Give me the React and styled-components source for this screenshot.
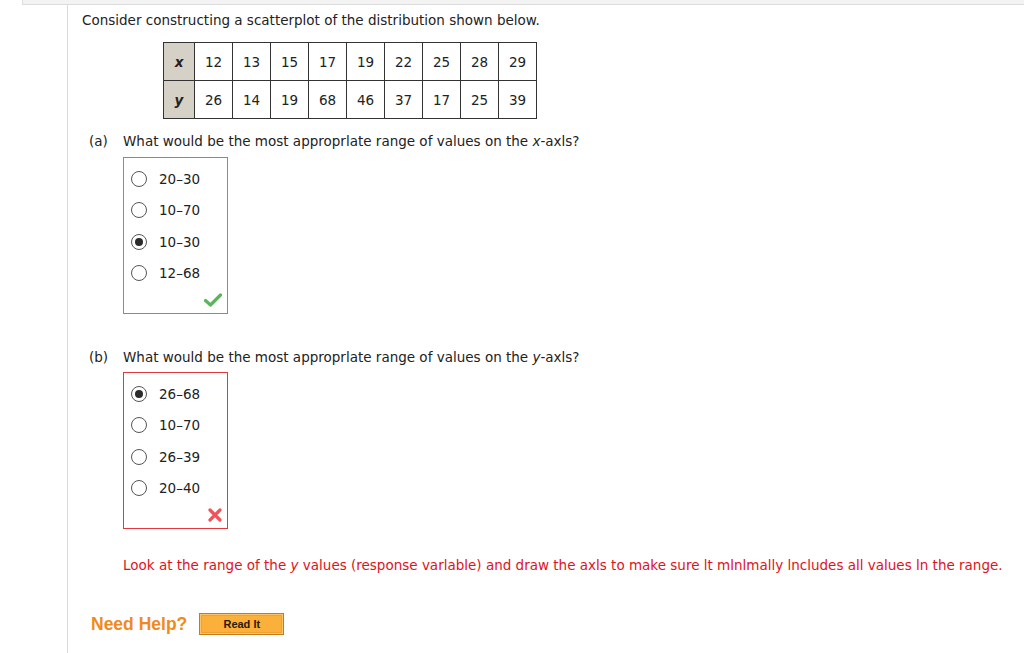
import React from "react";
import styled, { createGlobalStyle } from "styled-components";

const Global = createGlobalStyle`
  html, body { margin: 0; padding: 0; background: #fff; overflow: hidden; }
  body { font-family: "DejaVu Sans", Verdana, sans-serif; font-size: 13.5px; color: #222; }
`;

const TopBand = styled.div`
  margin-left: 22px;
  height: 4px;
  background: #f3f3f3;
  border-left: 1px solid #dcdcdc;
  border-bottom: 1px solid #dcdcdc;
`;

const Main = styled.div`
  margin-left: 67px;
  border-left: 1px solid #dcdcdc;
  height: 648px;
  padding-left: 14px;
  box-sizing: border-box;
`;

const Intro = styled.p`
  margin: 0;
  padding-top: 7px;
  line-height: 16px;
`;

const DataTable = styled.table`
  border-collapse: collapse;
  margin: 14px 0 0 81px;
`;

const HeadCell = styled.th`
  width: 30px;
  height: 37px;
  padding: 0;
  background: #d5d1c7;
  border: 1px solid #333;
  font-weight: bold;
  font-style: italic;
  text-align: center;
`;

const Cell = styled.td`
  width: 37px;
  height: 37px;
  padding: 0;
  border: 1px solid #333;
  text-align: center;
`;

const Part = styled.div`
  display: flex;
  margin-top: ${(p) => p.$top}px;
  margin-left: 7px;
`;

const Label = styled.span`
  width: 34px;
  line-height: 16px;
`;

const Body = styled.div`
  display: flex;
  flex-direction: column;
`;

const Question = styled.div`
  line-height: 16px;
`;

const Choices = styled.div`
  position: relative;
  width: 105px;
  height: 157px;
  margin-top: ${(p) => p.$gap}px;
  border: 1px solid ${(p) => (p.$ok ? "#6fa34c" : "#e0393e")};
  box-sizing: border-box;
  padding-top: 5px;
`;

const Option = styled.label`
  display: flex;
  align-items: center;
  height: 31.5px;
  padding-left: 7px;
  gap: 12px;
  color: #222;
`;

const Radio = styled.span`
  width: 16px;
  height: 16px;
  border-radius: 50%;
  border: 1px solid #555;
  box-sizing: border-box;
  display: flex;
  align-items: center;
  justify-content: center;
  background: #fff;
  &::after {
    content: "";
    display: ${(p) => (p.$on ? "block" : "none")};
    width: 8px;
    height: 8px;
    border-radius: 50%;
    background: #2b2b2b;
  }
`;

const Mark = styled.span`
  position: absolute;
  right: 5px;
  bottom: 6px;
  display: flex;
`;

const Feedback = styled.div`
  margin-top: 28px;
  margin-left: 41px;
  color: #e0121c;
  line-height: 16px;
`;

const Help = styled.div`
  display: flex;
  align-items: center;
  gap: 12px;
  margin-top: 40px;
  margin-left: 9px;
`;

const HelpText = styled.span`
  font-family: "Liberation Sans", Arial, sans-serif;
  font-weight: bold;
  font-size: 17.5px;
  color: #f08a1e;
`;

const ReadButton = styled.button`
  width: 85px;
  height: 22px;
  padding: 0;
  border: 1px solid #c97a18;
  background: #fbb03c;
  box-shadow: inset 0 0 0 1px #fdc56a, inset 0 0 0 2px #f2a02e;
  font-family: "Liberation Sans", Arial, sans-serif;
  font-weight: bold;
  font-size: 11px;
  color: #2a1a00;
  cursor: pointer;
`;

const Check = () => (
  <svg width="18" height="14" viewBox="0 0 18 14">
    <path d="M1.5 7.5 L6.5 12 L16.5 2" fill="none" stroke="#5bb55b" strokeWidth="3.2" strokeLinecap="round" strokeLinejoin="round" />
  </svg>
);

const Cross = () => (
  <svg width="14" height="14" viewBox="0 0 14 14">
    <path d="M2 2 L12 12 M12 2 L2 12" fill="none" stroke="#f0545a" strokeWidth="3.2" strokeLinecap="round" />
  </svg>
);

const xs = [12, 13, 15, 17, 19, 22, 25, 28, 29];
const ys = [26, 14, 19, 68, 46, 37, 17, 25, 39];

const Choice = ({ opts, sel, ok, gap }) => (
  <Choices $ok={ok} $gap={gap}>
    {opts.map((o, i) => (
      <Option key={o}>
        <Radio $on={i === sel} />
        {o}
      </Option>
    ))}
    <Mark>{ok ? <Check /> : <Cross />}</Mark>
  </Choices>
);

export default function App() {
  return (
    <>
      <Global />
      <TopBand />
      <Main>
        <Intro>Consider constructing a scatterplot of the distribution shown below.</Intro>
        <DataTable>
          <tbody>
            <tr>
              <HeadCell>x</HeadCell>
              {xs.map((v, i) => <Cell key={i}>{v}</Cell>)}
            </tr>
            <tr>
              <HeadCell>y</HeadCell>
              {ys.map((v, i) => <Cell key={i}>{v}</Cell>)}
            </tr>
          </tbody>
        </DataTable>
        <Part $top={14}>
          <Label>(a)</Label>
          <Body>
            <Question>What would be the most approprlate range of values on the <i>x</i>-axls?</Question>
            <Choice gap={8} opts={["20\u201330", "10\u201370", "10\u201330", "12\u201368"]} sel={2} ok />
          </Body>
        </Part>
        <Part $top={35}>
          <Label>(b)</Label>
          <Body>
            <Question>What would be the most approprlate range of values on the <i>y</i>-axls?</Question>
            <Choice gap={7} opts={["26\u201368", "10\u201370", "26\u201339", "20\u201340"]} sel={0} ok={false} />
          </Body>
        </Part>
        <Feedback>
          Look at the range of the <i>y</i> values (response varlable) and draw the axls to make sure lt mlnlmally lncludes all values ln the range.
        </Feedback>
        <Help>
          <HelpText>Need Help?</HelpText>
          <ReadButton>Read It</ReadButton>
        </Help>
      </Main>
    </>
  );
}
